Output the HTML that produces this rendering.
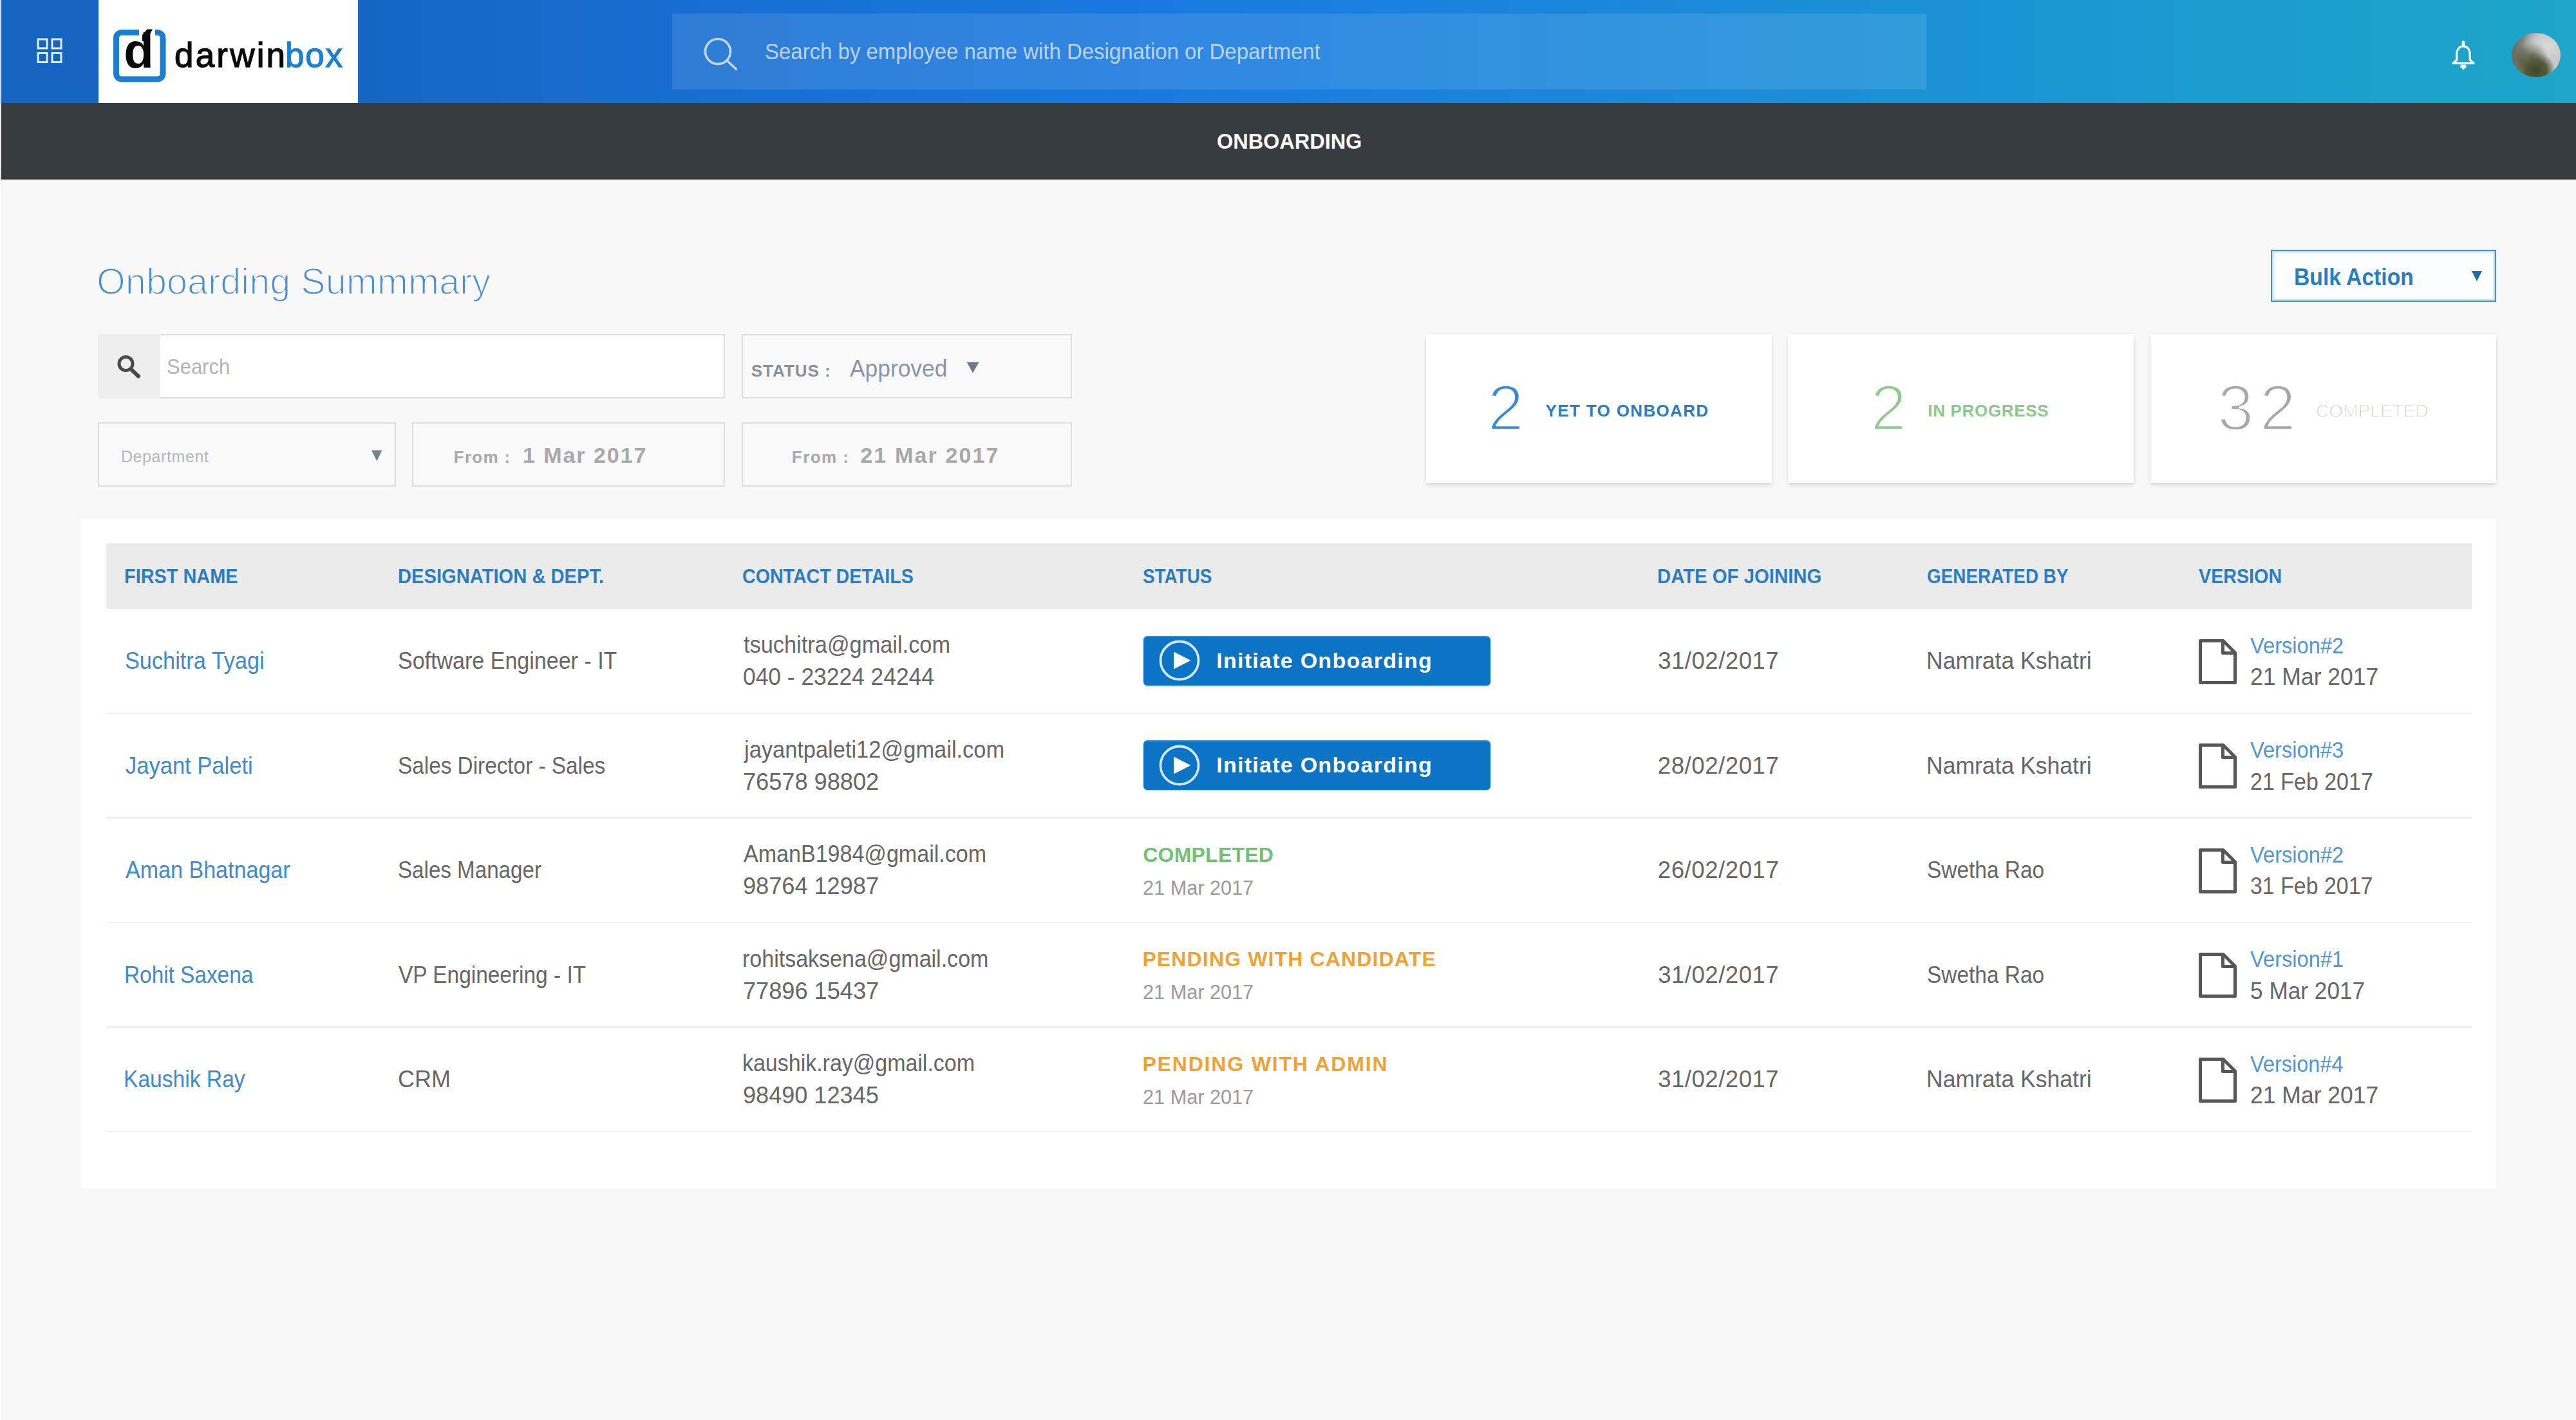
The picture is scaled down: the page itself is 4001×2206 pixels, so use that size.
<!DOCTYPE html>
<html lang="en"><head><meta charset="utf-8"><title>Onboarding Summary</title>
<style>
*{margin:0;padding:0}
html,body{width:4001px;height:2206px;overflow:hidden;background:#f8f8f8}
body{position:relative;font-family:"Liberation Sans",sans-serif}
.abs{position:absolute;display:block}
.g{position:absolute;left:0;top:0;width:0;height:0}
.t{position:absolute;white-space:pre;display:block;transform-origin:0 50%}
.card{background:#ffffff;box-shadow:0 5px 6px -1px rgba(0,0,0,.11),0 0 5px rgba(0,0,0,.07)}
.btn{background:#0b74c4;border-radius:6px;box-shadow:inset 0 2px 0 rgba(255,255,255,.18),0 1px 2px rgba(0,60,120,.35)}
</style></head>
<body>
<header class="abs" style="left:0;top:0;width:4001px;height:160px;background:linear-gradient(90deg,#1564c0 0%,#1566c3 14%,#176fd2 28%,#1979df 45%,#1a84dd 58%,#1a8fd6 72%,#1b9dce 87%,#1ca6c9 100%);">
<div class="abs" style="left:0;top:0;width:2px;height:160px;background:#c9d9ee"></div>
<svg class="abs" style="left:56px;top:58px" width="42" height="42" viewBox="0 0 42 42" fill="none" stroke="#e4ecf8" stroke-width="3"><rect x="3" y="3" width="14" height="14"/><rect x="25" y="3" width="14" height="14"/><rect x="3" y="24.5" width="14" height="14"/><rect x="25" y="24.5" width="14" height="14"/></svg>
<div class="abs" style="left:153px;top:0;width:403px;height:160px;background:#fff"></div>
<svg class="abs" style="left:172px;top:42px" width="90" height="90" viewBox="-4 -4 90 90"><path d="M40 4.500H13a8.500 8.500 0 0 0-8.500 8.500V68.500a8.500 8.500 0 0 0 8.500 8.500H68.500a8.500 8.500 0 0 0 8.500-8.500V13a8.500 8.500 0 0 0-8.500-8.500H65" fill="none" stroke="#1b7fcf" stroke-width="9"/></svg>
<span class="t" style="left:192.3px;top:41.0px;font-size:76px;line-height:76px;color:#0a0a0a;font-weight:bold;">d</span>
<svg class="abs" style="left:215px;top:40px" width="30" height="26" viewBox="0 0 30 26"><path d="M6 24V14L13.500 5.500H22L17.800 13V24z" fill="#0a0a0a"/></svg>
<span class="t" style="left:271.0px;top:59.3px;font-size:53px;line-height:53px;color:#0a0a0a;letter-spacing:3.19px;-webkit-text-stroke:1.3px #0a0a0a;">darwin</span>
<span class="t" style="left:442.9px;top:59.3px;font-size:53px;line-height:53px;color:#1b7fcf;letter-spacing:1.77px;-webkit-text-stroke:1.3px #1b7fcf;">box</span>
<div class="abs" style="left:1044px;top:21px;width:1948px;height:118px;border-radius:2px;background:rgba(255,255,255,0.105)"></div>
<svg class="abs" style="left:1088px;top:54px" width="62" height="62" viewBox="0 0 62 62" fill="none" stroke="#c3d6ec" stroke-width="3.6" stroke-linecap="round"><circle cx="27" cy="26" r="19.5"/><path d="M41.500 40.500L55.500 53.500"/></svg>
<span class="t" style="left:1188.0px;top:62.2px;font-size:35px;line-height:35px;color:#b9d3f1;transform:scaleX(0.9415);">Search by employee name with Designation or Department</span>
<svg class="abs" style="left:3800px;top:58px" width="52" height="56" viewBox="0 0 52 56" fill="none" stroke="#ffffff" stroke-width="3.2" stroke-linejoin="round" stroke-linecap="round"><path d="M10 40.200H42L36.200 35V27C36.200 18.600 32.200 13.800 26 13.800S15.800 18.600 15.800 27V35z"/><path d="M26 12.500V7.200" stroke-width="4.600"/><path d="M22.500 43.500h7v3.200h-7z" fill="#ffffff" stroke-width="2"/><path d="M26 47v1.500" stroke-width="3.500"/></svg>
<div class="abs" style="left:3901px;top:51px;width:76px;height:69px;border-radius:50%;overflow:hidden;background:radial-gradient(ellipse 30px 28px at 50% 84%,#3f4529 0%,#545a3a 55%,rgba(84,90,58,0) 100%),radial-gradient(ellipse 18px 24px at 20% 62%,#5f6545 0%,rgba(95,101,69,0) 100%),radial-gradient(ellipse 26px 22px at 40% 52%,#6b705a 0%,rgba(107,112,90,0) 100%),radial-gradient(ellipse 40px 36px at 74% 32%,#dadada 0%,#cbcbcb 55%,rgba(203,203,203,0) 100%),linear-gradient(100deg,#5e605f 0%,#8f908e 30%,#bdbdbd 65%,#cfcfcf 100%)"></div>
</header>
<nav class="abs" style="left:0;top:160px;width:4001px;height:118px;background:#373c40;border-bottom:2.500px solid #86898b"></nav>
<div class="abs" style="left:0;top:160px;width:2px;height:121px;background:#e8eaec"></div>
<span class="t" style="left:1889.7px;top:202.5px;font-size:33px;line-height:33px;color:#ffffff;transform:scaleX(0.9833);font-weight:bold;">ONBOARDING</span>
<main class="g">
<div class="abs" style="left:0;top:281px;width:2px;height:1925px;background:#fdfdfd"></div>
<section class="g" id="summary-filters">
<span class="t h1" style="left:150.3px;top:407.9px;font-size:58px;line-height:58px;color:#4b8fcf;transform:scaleX(0.9940);-webkit-text-stroke:1.9px #f8f8f8;">Onboarding Summmary</span>
<div class="abs" style="left:152px;top:519px;width:974px;height:100px;box-sizing:border-box;border:2.5px solid #dedede;background:#ffffff"></div>
<div class="abs" style="left:152px;top:519px;width:96.500px;height:100px;background:#eeeeee"></div>
<svg class="abs" style="left:180px;top:550px" width="42" height="42" viewBox="0 0 42 42" fill="none" stroke="#4a4a4a" stroke-width="5" stroke-linecap="round"><circle cx="15.500" cy="15" r="10.500"/><path d="M24 24L35 34.500" stroke-width="6"/></svg>
<span class="t" style="left:259.1px;top:551.6px;font-size:34px;line-height:34px;color:#b3b3b3;transform:scaleX(0.9108);">Search</span>
<div class="abs" style="left:1152px;top:519px;width:513px;height:100px;box-sizing:border-box;border:2.5px solid #dedede;background:#f9f9f9"></div>
<span class="t" style="left:1166.8px;top:562.8px;font-size:26px;line-height:26px;color:#8b9094;letter-spacing:0.96px;font-weight:bold;">STATUS :</span>
<span class="t" style="left:1320.4px;top:553.5px;font-size:37px;line-height:37px;color:#8797a8;transform:scaleX(0.9555);">Approved</span>
<svg class="abs" style="left:1500px;top:561px" width="22" height="20" viewBox="0 0 22 20"><path d="M1.500 1.500H20.500L11 18.500z" fill="#6d7a88"/></svg>
<div class="abs" style="left:152px;top:656px;width:463px;height:100px;box-sizing:border-box;border:2.5px solid #dedede;background:#f9f9f9"></div>
<span class="t" style="left:187.9px;top:697.1px;font-size:25px;line-height:25px;color:#b3b7bb;letter-spacing:0.59px;">Department</span>
<svg class="abs" style="left:576px;top:698px" width="20" height="20" viewBox="0 0 20 20"><path d="M1 1.500H17.500L9.250 18.500z" fill="#7d8286"/></svg>
<div class="abs" style="left:640px;top:656px;width:486px;height:100px;box-sizing:border-box;border:2.5px solid #dedede;background:#f9f9f9"></div>
<span class="t" style="left:704.8px;top:696.8px;font-size:26px;line-height:26px;color:#a9a9a9;letter-spacing:1.27px;font-weight:bold;">From :</span>
<span class="t" style="left:811.9px;top:690.0px;font-size:34px;line-height:34px;color:#a9a9a9;letter-spacing:1.97px;font-weight:bold;">1 Mar 2017</span>
<div class="abs" style="left:1152px;top:656px;width:513px;height:100px;box-sizing:border-box;border:2.5px solid #dedede;background:#f9f9f9"></div>
<span class="t" style="left:1229.8px;top:696.8px;font-size:26px;line-height:26px;color:#a9a9a9;letter-spacing:1.47px;font-weight:bold;">From :</span>
<span class="t" style="left:1336.3px;top:690.0px;font-size:34px;line-height:34px;color:#a9a9a9;letter-spacing:2.14px;font-weight:bold;">21 Mar 2017</span>
<div class="abs" style="left:3527px;top:388px;width:350px;height:80.500px;box-sizing:border-box;border:2.200px solid #4f8cbf;box-shadow:inset 0 0 0 2.500px #bfe0f7;background:#fafcfd"></div>
<span class="t" style="left:3563.2px;top:411.9px;font-size:37px;line-height:37px;color:#2b7dc1;transform:scaleX(0.9101);font-weight:bold;">Bulk Action</span>
<svg class="abs" style="left:3838px;top:420px" width="18" height="18" viewBox="0 0 18 18"><path d="M1 1H17L9 17z" fill="#2268ad"/></svg>
</section>
<section class="g" id="summary-cards">
<div class="abs card" style="left:2215px;top:519px;width:537px;height:231px"></div>
<div class="abs card" style="left:2777px;top:519px;width:538px;height:231px"></div>
<div class="abs card" style="left:3340px;top:519px;width:537px;height:231px"></div>
<span class="t" style="left:2310.6px;top:583.1px;font-size:101px;line-height:101px;color:#3b8bd0;-webkit-text-stroke:3.4px #ffffff;">2</span>
<span class="t" style="left:2400.6px;top:624.8px;font-size:26px;line-height:26px;color:#2b7dc1;letter-spacing:1.35px;font-weight:bold;">YET TO ONBOARD</span>
<span class="t" style="left:2905.2px;top:583.1px;font-size:101px;line-height:101px;color:#8fcb8f;-webkit-text-stroke:3.4px #ffffff;">2</span>
<span class="t" style="left:2994.3px;top:624.8px;font-size:26px;line-height:26px;color:#8cc98c;letter-spacing:0.67px;font-weight:bold;">IN PROGRESS</span>
<span class="t" style="left:3444.2px;top:583.1px;font-size:101px;line-height:101px;color:#a8a8a8;letter-spacing:9.28px;-webkit-text-stroke:3.4px #ffffff;">32</span>
<span class="t" style="left:3597.1px;top:624.5px;font-size:28px;line-height:28px;color:#c9c9c9;letter-spacing:0.06px;-webkit-text-stroke:1.2px #ffffff;">COMPLETED</span>
</section>
<section class="g" id="onboarding-table">
<div class="abs" style="left:126px;top:806px;width:3750.500px;height:1040.500px;background:#ffffff"></div>
<div class="g thead">
<div class="abs" style="left:165px;top:844px;width:3674.500px;height:101.500px;background:#ebebeb"></div>
<span class="t th" style="left:193.3px;top:879.1px;font-size:32px;line-height:32px;color:#2b7dc1;transform:scaleX(0.9029);font-weight:bold;">FIRST NAME</span>
<span class="t th" style="left:617.8px;top:879.1px;font-size:32px;line-height:32px;color:#2b7dc1;transform:scaleX(0.9110);font-weight:bold;">DESIGNATION &amp; DEPT.</span>
<span class="t th" style="left:1153.3px;top:879.1px;font-size:32px;line-height:32px;color:#2b7dc1;transform:scaleX(0.8935);font-weight:bold;">CONTACT DETAILS</span>
<span class="t th" style="left:1774.7px;top:879.1px;font-size:32px;line-height:32px;color:#2b7dc1;transform:scaleX(0.8713);font-weight:bold;">STATUS</span>
<span class="t th" style="left:2574.0px;top:879.1px;font-size:32px;line-height:32px;color:#2b7dc1;transform:scaleX(0.9165);font-weight:bold;">DATE OF JOINING</span>
<span class="t th" style="left:2992.9px;top:879.1px;font-size:32px;line-height:32px;color:#2b7dc1;transform:scaleX(0.8718);font-weight:bold;">GENERATED BY</span>
<span class="t th" style="left:3414.8px;top:879.1px;font-size:32px;line-height:32px;color:#2b7dc1;transform:scaleX(0.8965);font-weight:bold;">VERSION</span>
</div>
<div class="g row">
<span class="t" style="left:193.6px;top:1009.4px;font-size:36.5px;line-height:36.5px;color:#3f8acb;transform:scaleX(0.9395);">Suchitra Tyagi</span>
<span class="t" style="left:617.8px;top:1009.4px;font-size:36.5px;line-height:36.5px;color:#666666;transform:scaleX(0.9322);">Software Engineer - IT</span>
<span class="t" style="left:1154.8px;top:984.1px;font-size:36.5px;line-height:36.5px;color:#666666;transform:scaleX(0.9404);">tsuchitra@gmail.com</span>
<span class="t" style="left:1154.1px;top:1034.0px;font-size:36.5px;line-height:36.5px;color:#666666;transform:scaleX(0.9688);">040 - 23224 24244</span>
<div class="abs btn" style="left:1775.500px;top:987.5px;width:539.500px;height:77px"></div>
<svg class="abs" style="left:1797px;top:992px" width="70" height="70" viewBox="0 0 70 70"><circle cx="35" cy="34" r="29.500" fill="none" stroke="#cfe6fb" stroke-width="3.800"/><path d="M26 20.500V47.500L52.500 34z" fill="#ffffff"/></svg>
<span class="t" style="left:1889.2px;top:1008.9px;font-size:34px;line-height:34px;color:#ffffff;letter-spacing:1.27px;font-weight:bold;">Initiate Onboarding</span>
<span class="t" style="left:2575.2px;top:1009.4px;font-size:36.5px;line-height:36.5px;color:#666666;letter-spacing:0.53px;">31/02/2017</span>
<span class="t" style="left:2991.7px;top:1009.4px;font-size:36.5px;line-height:36.5px;color:#666666;transform:scaleX(0.9735);">Namrata Kshatri</span>
<svg class="abs" style="left:3411px;top:988.5px" width="68" height="80" viewBox="0 0 68 80" fill="none" stroke="#575757" stroke-width="5" stroke-linejoin="round"><path d="M6.500 6.500H42L60.500 25V71.500H6.500z"/><path d="M41.500 8V25.500H59"/></svg>
<span class="t" style="left:3495.4px;top:984.5px;font-size:35px;line-height:35px;color:#4f97d3;transform:scaleX(0.9333);">Version#2</span>
<span class="t" style="left:3494.5px;top:1034.1px;font-size:36.5px;line-height:36.5px;color:#666666;transform:scaleX(0.9723);">21 Mar 2017</span>
<div class="abs" style="left:165px;top:1106.5px;width:3674.500px;height:2.500px;background:#f0f0f0"></div>
</div>
<div class="g row">
<span class="t" style="left:194.7px;top:1171.9px;font-size:36.5px;line-height:36.5px;color:#3f8acb;transform:scaleX(0.9458);">Jayant Paleti</span>
<span class="t" style="left:617.8px;top:1171.9px;font-size:36.5px;line-height:36.5px;color:#666666;transform:scaleX(0.9129);">Sales Director - Sales</span>
<span class="t" style="left:1156.1px;top:1146.6px;font-size:36.5px;line-height:36.5px;color:#666666;transform:scaleX(0.9428);">jayantpaleti12@gmail.com</span>
<span class="t" style="left:1153.6px;top:1196.5px;font-size:36.5px;line-height:36.5px;color:#666666;transform:scaleX(0.9908);">76578 98802</span>
<div class="abs btn" style="left:1775.500px;top:1150px;width:539.500px;height:77px"></div>
<svg class="abs" style="left:1797px;top:1154.5px" width="70" height="70" viewBox="0 0 70 70"><circle cx="35" cy="34" r="29.500" fill="none" stroke="#cfe6fb" stroke-width="3.800"/><path d="M26 20.500V47.500L52.500 34z" fill="#ffffff"/></svg>
<span class="t" style="left:1889.2px;top:1171.4px;font-size:34px;line-height:34px;color:#ffffff;letter-spacing:1.27px;font-weight:bold;">Initiate Onboarding</span>
<span class="t" style="left:2574.8px;top:1171.9px;font-size:36.5px;line-height:36.5px;color:#666666;letter-spacing:0.58px;">28/02/2017</span>
<span class="t" style="left:2991.7px;top:1171.9px;font-size:36.5px;line-height:36.5px;color:#666666;transform:scaleX(0.9735);">Namrata Kshatri</span>
<svg class="abs" style="left:3411px;top:1151px" width="68" height="80" viewBox="0 0 68 80" fill="none" stroke="#575757" stroke-width="5" stroke-linejoin="round"><path d="M6.500 6.500H42L60.500 25V71.500H6.500z"/><path d="M41.500 8V25.500H59"/></svg>
<span class="t" style="left:3495.4px;top:1147.0px;font-size:35px;line-height:35px;color:#4f97d3;transform:scaleX(0.9319);">Version#3</span>
<span class="t" style="left:3494.6px;top:1196.6px;font-size:36.5px;line-height:36.5px;color:#666666;transform:scaleX(0.9309);">21 Feb 2017</span>
<div class="abs" style="left:165px;top:1269px;width:3674.500px;height:2.500px;background:#f0f0f0"></div>
</div>
<div class="g row">
<span class="t" style="left:195.1px;top:1334.4px;font-size:36.5px;line-height:36.5px;color:#3f8acb;transform:scaleX(0.9332);">Aman Bhatnagar</span>
<span class="t" style="left:617.8px;top:1334.4px;font-size:36.5px;line-height:36.5px;color:#666666;transform:scaleX(0.9081);">Sales Manager</span>
<span class="t" style="left:1155.2px;top:1309.1px;font-size:36.5px;line-height:36.5px;color:#666666;transform:scaleX(0.9326);">AmanB1984@gmail.com</span>
<span class="t" style="left:1153.8px;top:1359.0px;font-size:36.5px;line-height:36.5px;color:#666666;transform:scaleX(0.9900);">98764 12987</span>
<span class="t" style="left:1775.2px;top:1311.7px;font-size:32px;line-height:32px;color:#72c072;letter-spacing:0.23px;font-weight:bold;">COMPLETED</span>
<span class="t" style="left:1775.0px;top:1363.6px;font-size:31px;line-height:31px;color:#9a9a9a;transform:scaleX(0.9892);">21 Mar 2017</span>
<span class="t" style="left:2574.8px;top:1334.4px;font-size:36.5px;line-height:36.5px;color:#666666;letter-spacing:0.58px;">26/02/2017</span>
<span class="t" style="left:2993.1px;top:1334.4px;font-size:36.5px;line-height:36.5px;color:#666666;transform:scaleX(0.9159);">Swetha Rao</span>
<svg class="abs" style="left:3411px;top:1313.5px" width="68" height="80" viewBox="0 0 68 80" fill="none" stroke="#575757" stroke-width="5" stroke-linejoin="round"><path d="M6.500 6.500H42L60.500 25V71.500H6.500z"/><path d="M41.500 8V25.500H59"/></svg>
<span class="t" style="left:3495.4px;top:1309.5px;font-size:35px;line-height:35px;color:#4f97d3;transform:scaleX(0.9333);">Version#2</span>
<span class="t" style="left:3495.0px;top:1359.1px;font-size:36.5px;line-height:36.5px;color:#666666;transform:scaleX(0.9288);">31 Feb 2017</span>
<div class="abs" style="left:165px;top:1431.5px;width:3674.500px;height:2.500px;background:#f0f0f0"></div>
</div>
<div class="g row">
<span class="t" style="left:192.5px;top:1496.9px;font-size:36.5px;line-height:36.5px;color:#3f8acb;transform:scaleX(0.9137);">Rohit Saxena</span>
<span class="t" style="left:619.2px;top:1496.9px;font-size:36.5px;line-height:36.5px;color:#666666;transform:scaleX(0.9158);">VP Engineering - IT</span>
<span class="t" style="left:1153.0px;top:1471.6px;font-size:36.5px;line-height:36.5px;color:#666666;transform:scaleX(0.9319);">rohitsaksena@gmail.com</span>
<span class="t" style="left:1153.6px;top:1521.5px;font-size:36.5px;line-height:36.5px;color:#666666;transform:scaleX(0.9908);">77896 15437</span>
<span class="t" style="left:1774.4px;top:1474.2px;font-size:32px;line-height:32px;color:#f0a236;letter-spacing:1.14px;font-weight:bold;">PENDING WITH CANDIDATE</span>
<span class="t" style="left:1775.0px;top:1526.1px;font-size:31px;line-height:31px;color:#9a9a9a;transform:scaleX(0.9892);">21 Mar 2017</span>
<span class="t" style="left:2575.2px;top:1496.9px;font-size:36.5px;line-height:36.5px;color:#666666;letter-spacing:0.53px;">31/02/2017</span>
<span class="t" style="left:2993.1px;top:1496.9px;font-size:36.5px;line-height:36.5px;color:#666666;transform:scaleX(0.9159);">Swetha Rao</span>
<svg class="abs" style="left:3411px;top:1476px" width="68" height="80" viewBox="0 0 68 80" fill="none" stroke="#575757" stroke-width="5" stroke-linejoin="round"><path d="M6.500 6.500H42L60.500 25V71.500H6.500z"/><path d="M41.500 8V25.500H59"/></svg>
<span class="t" style="left:3495.4px;top:1472.0px;font-size:35px;line-height:35px;color:#4f97d3;transform:scaleX(0.9329);">Version#1</span>
<span class="t" style="left:3494.9px;top:1521.6px;font-size:36.5px;line-height:36.5px;color:#666666;transform:scaleX(0.9650);">5 Mar 2017</span>
<div class="abs" style="left:165px;top:1594px;width:3674.500px;height:2.500px;background:#f0f0f0"></div>
</div>
<div class="g row">
<span class="t" style="left:192.4px;top:1659.4px;font-size:36.5px;line-height:36.5px;color:#3f8acb;transform:scaleX(0.9205);">Kaushik Ray</span>
<span class="t" style="left:617.5px;top:1659.4px;font-size:36.5px;line-height:36.5px;color:#666666;transform:scaleX(0.9862);">CRM</span>
<span class="t" style="left:1153.0px;top:1634.1px;font-size:36.5px;line-height:36.5px;color:#666666;transform:scaleX(0.9305);">kaushik.ray@gmail.com</span>
<span class="t" style="left:1153.8px;top:1684.0px;font-size:36.5px;line-height:36.5px;color:#666666;transform:scaleX(0.9886);">98490 12345</span>
<span class="t" style="left:1774.4px;top:1636.7px;font-size:32px;line-height:32px;color:#f0a236;letter-spacing:1.83px;font-weight:bold;">PENDING WITH ADMIN</span>
<span class="t" style="left:1775.0px;top:1688.6px;font-size:31px;line-height:31px;color:#9a9a9a;transform:scaleX(0.9892);">21 Mar 2017</span>
<span class="t" style="left:2575.2px;top:1659.4px;font-size:36.5px;line-height:36.5px;color:#666666;letter-spacing:0.53px;">31/02/2017</span>
<span class="t" style="left:2991.7px;top:1659.4px;font-size:36.5px;line-height:36.5px;color:#666666;transform:scaleX(0.9735);">Namrata Kshatri</span>
<svg class="abs" style="left:3411px;top:1638.5px" width="68" height="80" viewBox="0 0 68 80" fill="none" stroke="#575757" stroke-width="5" stroke-linejoin="round"><path d="M6.500 6.500H42L60.500 25V71.500H6.500z"/><path d="M41.500 8V25.500H59"/></svg>
<span class="t" style="left:3495.4px;top:1634.5px;font-size:35px;line-height:35px;color:#4f97d3;transform:scaleX(0.9288);">Version#4</span>
<span class="t" style="left:3494.5px;top:1684.1px;font-size:36.5px;line-height:36.5px;color:#666666;transform:scaleX(0.9723);">21 Mar 2017</span>
<div class="abs" style="left:165px;top:1756.5px;width:3674.500px;height:2.500px;background:#f0f0f0"></div>
</div>
</section>
</main>
</body></html>
